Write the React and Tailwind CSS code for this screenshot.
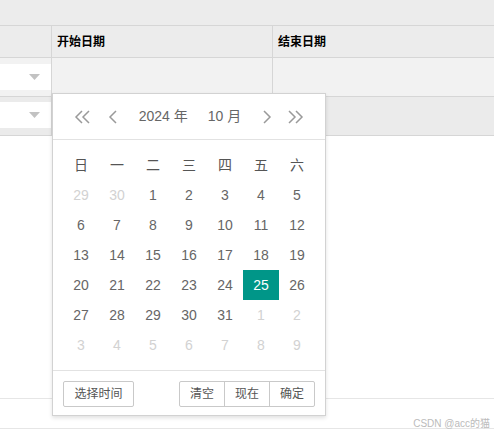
import React from "react";

const FONT = { fontFamily: '"Liberation Sans", Arial, "Noto Sans CJK SC", sans-serif' };

function Caret() {
  return (
    <svg width="11" height="6" viewBox="0 0 11 6" className="block">
      <polygon points="0,0 11,0 5.5,6" fill="#c2c2c2" />
    </svg>
  );
}

function Single({ dir }) {
  const pts = dir === "l" ? "8,1 2,7 8,13" : "1,1 7,7 1,13";
  return (
    <svg width="9" height="14" viewBox="0 0 9 14" className="block">
      <polyline points={pts} fill="none" stroke="#9a9a9a" strokeWidth="1.5" />
    </svg>
  );
}

function Double({ dir }) {
  const a = dir === "l" ? "8,1 2,7 8,13" : "1,1 7,7 1,13";
  const b = dir === "l" ? "15,1 9,7 15,13" : "8,1 14,7 8,13";
  return (
    <svg width="17" height="14" viewBox="0 0 17 14" className="block">
      <polyline points={a} fill="none" stroke="#9a9a9a" strokeWidth="1.5" />
      <polyline points={b} fill="none" stroke="#9a9a9a" strokeWidth="1.5" />
    </svg>
  );
}

const weeks = ["日", "一", "二", "三", "四", "五", "六"];
const days = [
  [29, 30, 1, 2, 3, 4, 5],
  [6, 7, 8, 9, 10, 11, 12],
  [13, 14, 15, 16, 17, 18, 19],
  [20, 21, 22, 23, 24, 25, 26],
  [27, 28, 29, 30, 31, 1, 2],
  [3, 4, 5, 6, 7, 8, 9],
];

function isOther(r, d) {
  return (r === 0 && d > 20) || (r >= 4 && d < 10);
}

export default function App() {
  return (
    <div className="relative w-[494px] h-[436px] bg-white overflow-hidden" style={FONT}>
      <div className="h-[26px] bg-[#ececec] border-b border-[#d6d6d6]" />
      {/* header row */}
      <div className="flex h-[32px] bg-[#ececec] border-b border-[#d6d6d6]">
        <div className="w-[52px] border-r border-[#d6d6d6]" />
        <div className="w-[221px] border-r border-[#d6d6d6] flex items-center pl-[5px] text-[12px] font-bold text-black">
          开始日期
        </div>
        <div className="flex-1 flex items-center pl-[5px] text-[12px] font-bold text-black">结束日期</div>
      </div>
      {/* row 2 */}
      <div className="flex h-[39px] bg-[#f2f2f2] border-b border-[#d6d6d6]">
        <div className="w-[52px] border-r border-[#d6d6d6] pt-[6px]">
          <div className="h-[26px] w-[51px] bg-white flex items-center pl-[29px]">
            <Caret />
          </div>
        </div>
        <div className="w-[221px] border-r border-[#d6d6d6]" />
        <div className="flex-1" />
      </div>
      {/* row 3 */}
      <div className="flex h-[39px] bg-[#ebebeb] border-b border-[#d6d6d6]">
        <div className="w-[52px] border-r border-[#d6d6d6] pt-[5px]">
          <div className="h-[26px] w-[51px] bg-white flex items-center pl-[29px]">
            <Caret />
          </div>
        </div>
        <div className="w-[221px] border-r border-[#d6d6d6]" />
        <div className="flex-1" />
      </div>
      <div className="h-[262px]" />
      <div className="h-[31px] border-t border-[#e6e6e6] border-b" />
      <div className="absolute right-[4px] top-[417px] text-[10px] text-[#bbbbbb] leading-[14px]">CSDN @acc的猫</div>

      {/* date popup */}
      <div className="absolute left-[52px] top-[93px] w-[274px] h-[323px] bg-white border border-[#d2d2d2] shadow-[0_2px_4px_rgba(0,0,0,0.12)] flex flex-col">
        <div className="h-[46px] border-b border-[#e2e2e2] flex items-center">
          <div className="ml-[21px]">
            <Double dir="l" />
          </div>
          <div className="ml-[17px]">
            <Single dir="l" />
          </div>
          <div className="flex-1 flex justify-center gap-[20px] text-[14px] text-[#666]">
            <span>2024 年</span>
            <span>10 月</span>
          </div>
          <div>
            <Single dir="r" />
          </div>
          <div className="ml-[16px] mr-[20px]">
            <Double dir="r" />
          </div>
        </div>
        <div className="px-[10px] pt-[10px] pb-[10px] border-b border-[#e2e2e2]">
          <div className="grid grid-cols-[repeat(7,36px)]">
            {weeks.map((w) => (
              <div key={w} className="h-[30px] flex items-center justify-center text-[14px] text-[#555]">
                {w}
              </div>
            ))}
            {days.map((row, r) =>
              row.map((d, i) => {
                const sel = r === 3 && d === 25;
                const other = isOther(r, d);
                return (
                  <div
                    key={r + "-" + i}
                    className={
                      "h-[30px] flex items-center justify-center text-[14px] " +
                      (sel ? "bg-[#009688] text-white" : other ? "text-[#d2d2d2]" : "text-[#666]")
                    }
                  >
                    {d}
                  </div>
                );
              })
            )}
          </div>
        </div>
        <div className="flex items-start pt-[10px] px-[10px]">
          <div className="h-[26px] w-[71px] border border-[#c9c9c9] rounded-[2px] flex items-center justify-center text-[12px] text-[#555]">
            选择时间
          </div>
          <div className="ml-auto flex">
            <div className="h-[26px] w-[46px] border border-[#c9c9c9] rounded-l-[2px] flex items-center justify-center text-[12px] text-[#555]">
              清空
            </div>
            <div className="h-[26px] w-[46px] -ml-px border border-[#c9c9c9] flex items-center justify-center text-[12px] text-[#555]">
              现在
            </div>
            <div className="h-[26px] w-[46px] -ml-px border border-[#c9c9c9] rounded-r-[2px] flex items-center justify-center text-[12px] text-[#555]">
              确定
            </div>
          </div>
        </div>
      </div>
    </div>
  );
}
